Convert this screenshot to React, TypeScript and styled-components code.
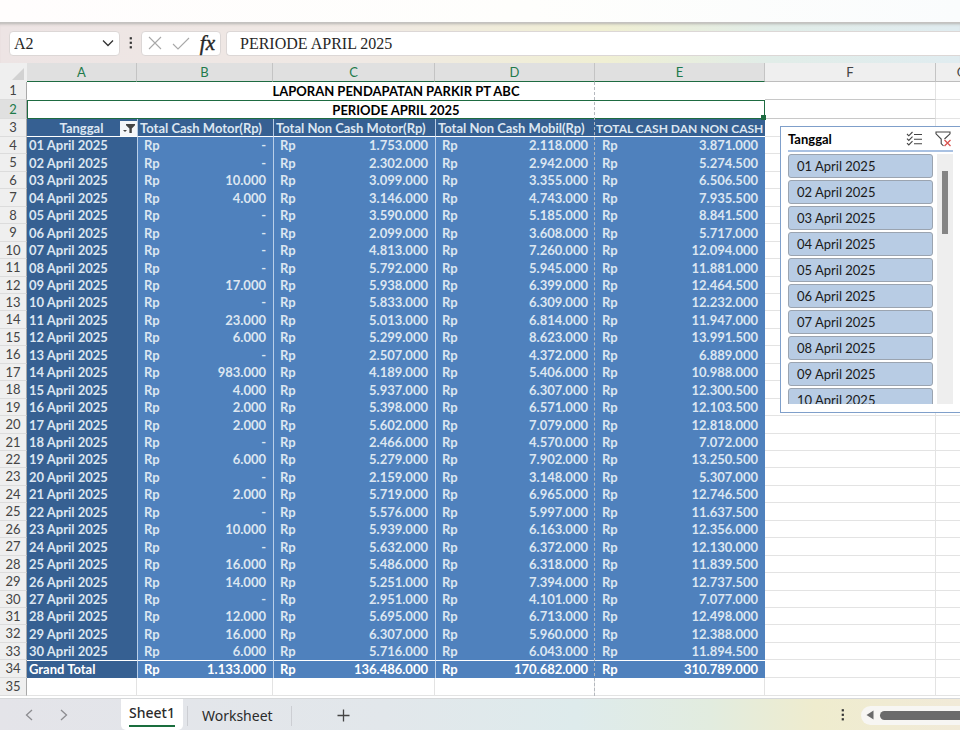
import React from "react";
import styled, { createGlobalStyle, css } from "styled-components";

const GlobalStyle = createGlobalStyle`
  * { box-sizing: border-box; }
  body { margin: 0; background: #fff; overflow-x: hidden; }
  button, input { font: inherit; color: inherit; margin: 0; }
`;

const sans = `Lato, "Liberation Sans", sans-serif`;
const serif = `"Liberation Serif", serif`;
const ui = `"Noto Sans", "Open Sans", sans-serif`;
const green = "#1e6b41";

const Page = styled.div`
  display: flex;
  flex-direction: column;
  min-height: 100vh;
  overflow: hidden;
  font-family: ${sans};
`;

const Ribbon = styled.header`
  height: 22px;
  background: linear-gradient(90deg, #fffdfd, #fefefc 55%, #fafcfd);
`;

const FormulaBar = styled.div`
  display: flex;
  align-items: center;
  height: 41px;
  padding-left: 9px;
  border-top: 1px solid #c4c2c0;
  box-shadow: inset 0 3px 3px -2px #b5b3b0;
  background: linear-gradient(90deg, #ede4e4, #f0e9e4 38%, #f0efd3 63%, #e1ede8 80%, #e0ecf0);
  font-family: ${serif};
  font-size: 16px;
  color: #262626;
`;

const FieldBox = styled.div`
  display: flex;
  align-items: center;
  height: 25px;
  background: #fff;
  border: 1px solid #dcd7d6;
  border-radius: 4px;
`;

const NameBox = styled(FieldBox)`
  width: 111px;
  padding: 0 5px 0 4px;
`;

const FormulaButtons = styled(FieldBox)`
  width: 80px;
  justify-content: space-between;
  padding: 0 5px 0 6px;
`;

const FormulaField = styled(FieldBox)`
  flex: 1;
  margin-left: 5px;
  padding-left: 13px;
  border-right: 0;
  border-radius: 4px 0 0 4px;
`;

const TextInput = styled.input`
  flex: 1;
  min-width: 0;
  padding: 2px 0 0;
  border: 0;
  outline: 0;
  background: transparent;
`;

const IconButton = styled.button`
  display: inline-flex;
  align-items: center;
  justify-content: center;
  padding: 0;
  border: 0;
  background: transparent;
`;

const BarGrip = styled(IconButton)`
  width: 21px;
`;

const FxButton = styled(IconButton)`
  font-size: 21px;
  font-style: italic;
  line-height: 20px;
  -webkit-text-stroke: 0.4px #262626;
`;

const SheetArea = styled.main`
  position: relative;
  flex: 1;
  overflow: hidden;
  background: #fff;
`;

const Grid = styled.table`
  width: 100%;
  min-width: 988px;
  table-layout: fixed;
  border-collapse: separate;
  border-spacing: 0;
  font-size: 13px;
  line-height: 15px;
`;

const Col = styled.col<{ $w?: number }>`
  width: ${(p) => (p.$w ? `${p.$w}px` : "auto")};
`;

const Row = styled.tr<{ $h: number }>`
  height: ${(p) => p.$h}px;
`;

const cell = css`
  padding: 0;
  overflow: hidden;
  white-space: nowrap;
`;

const ColumnHead = styled.th<{ $active?: boolean }>`
  ${cell}
  font-weight: 400;
  color: ${(p) => (p.$active ? "#1f7a4b" : "#444")};
  background: ${(p) => (p.$active ? "#e0e0e0" : "#efefef")};
  border-bottom: 1px solid ${(p) => (p.$active ? green : "#bdbdbd")};
  border-right: 1px solid #c4c4c4;
`;

const Corner = styled.td`
  padding: 0 2px 1px 0;
  background: #efefef;
  text-align: right;
  vertical-align: bottom;
  line-height: 0;
`;

const RowHead = styled.th<{ $active?: boolean }>`
  ${cell}
  font-weight: 400;
  color: ${(p) => (p.$active ? "#1f7a4b" : "#444")};
  background: ${(p) => (p.$active ? "#e0e0e0" : "#efefef")};
  border-bottom: 1px solid #dcdcdc;
  border-right: 1px solid #a9a9a9;
`;

const Blank = styled.td<{ $strong?: boolean }>`
  ${cell}
  border-bottom: 1px solid ${(p) => (p.$strong ? "#c8c8c8" : "#e3e3e3")};
  border-right: 1px solid #e3e3e3;
`;

const Title = styled.td<{ $selected?: boolean }>`
  position: relative;
  padding: 0;
  text-align: center;
  font-weight: 700;
  color: #000;
  ${(p) =>
    p.$selected &&
    css`
      padding-top: 1px;
      border: 1px solid ${green};
    `}
`;

const FillHandle = styled.span`
  position: absolute;
  right: -2px;
  bottom: -2px;
  width: 5px;
  height: 5px;
  background: ${green};
  z-index: 1;
`;

const FieldHead = styled.th<{ $divided?: boolean; $long?: boolean }>`
  ${cell}
  padding: 1px 0 0 ${(p) => (p.$divided ? 2 : 1)}px;
  text-align: left;
  font-size: ${(p) => (p.$long ? 12 : 13)}px;
  font-weight: 700;
  color: #dce6f1;
  background: #366092;
  border-bottom: 1px solid #fff;
  border-left: ${(p) => (p.$divided ? "1px solid #b9cbe2" : "0")};
`;

const FilterHead = styled.div`
  display: grid;
  grid-template-columns: 15px 1fr 17px;
  align-items: center;
  text-align: center;
`;

const FilterButton = styled(IconButton)`
  height: 15px;
  background: #f4f6f9;
`;

const DateCell = styled.th<{ $total?: boolean }>`
  ${cell}
  padding-left: 2px;
  text-align: left;
  font-weight: 700;
  color: ${(p) => (p.$total ? "#fff" : "#dce6f1")};
  background: #366092;
  border-top: ${(p) => (p.$total ? "1px solid #fff" : "0")};
`;

const MoneyCell = styled.td<{ $total?: boolean; $divided?: boolean }>`
  ${cell}
  padding: 0 7px 0 ${(p) => (p.$divided ? 6 : 7)}px;
  font-weight: 700;
  color: ${(p) => (p.$total ? "#fff" : "#dce6f1")};
  background: #4f81bd;
  border-top: ${(p) => (p.$total ? "1px solid #fff" : "0")};
  border-left: ${(p) => (p.$divided ? "1px solid #b9cfe9" : "0")};
`;

const Money = styled.div`
  display: flex;
  justify-content: space-between;
`;

const PageBreak = styled.div`
  position: absolute;
  top: 19px;
  bottom: 2px;
  left: 594px;
  border-left: 1px dashed #b4b8be;
`;

const Slicer = styled.section`
  position: absolute;
  top: 63px;
  left: 780px;
  width: 182px;
  height: 287px;
  padding: 0 8px 8px 7px;
  display: flex;
  flex-direction: column;
  background: #fff;
  border: 1px solid #7f9fca;
`;

const SlicerHead = styled.div`
  display: flex;
  align-items: center;
  height: 25px;
  border-bottom: 2px solid #a9c1e2;
`;

const SlicerTitle = styled.h2`
  flex: 1;
  margin: 0;
  font-size: 13px;
  line-height: 16px;
  font-weight: 700;
  color: #000;
`;

const SlicerTools = styled.div`
  display: flex;
  gap: 12px;
  padding-right: 1px;
`;

const SlicerBody = styled.div`
  flex: 1;
  display: flex;
  justify-content: space-between;
  min-height: 0;
  padding-top: 2px;
`;

const SlicerList = styled.div`
  display: flex;
  flex-direction: column;
  gap: 2px;
  width: 145px;
  overflow: hidden;
`;

const SlicerItem = styled.button`
  flex: none;
  height: 24px;
  padding: 0 8px;
  text-align: left;
  font-size: 13px;
  line-height: 16px;
  color: #1a1a1a;
  background: #b8cce4;
  border: 1px solid #9ba4b0;
  border-radius: 3px;
`;

const SlicerTrack = styled.div`
  width: 16px;
  padding: 17px 5px 0;
  background: #eee;
`;

const SlicerThumb = styled.div`
  height: 63px;
  background: #858585;
`;

const TabBar = styled.footer`
  display: flex;
  align-items: flex-start;
  height: 32px;
  padding-left: 20px;
  border-top: 1px solid #d6d8da;
  background: linear-gradient(90deg, #e4e4e9, #e2e7eb 40%, #deebec 60%, #e2ecdf 74%, #efecce 85%, #f1ead8);
  font-family: ${ui};
  font-size: 14px;
  color: #2b2b2b;
`;

const TabNav = styled.div`
  display: flex;
  gap: 17px;
  width: 101px;
`;

const NavButton = styled(IconButton)`
  width: 18px;
  height: 32px;
`;

const Tab = styled.button<{ $active?: boolean }>`
  height: ${(p) => (p.$active ? 31 : 32)}px;
  padding: ${(p) => (p.$active ? "0 8px" : "5px 14px 0")};
  border: 0;
  border-radius: 0 0 5px 5px;
  background: ${(p) => (p.$active ? "#fff" : "transparent")};
  line-height: 20px;
`;

const TabLabel = styled.span<{ $active?: boolean }>`
  display: block;
  font-weight: ${(p) => (p.$active ? 500 : 400)};
  padding-bottom: 2px;
  border-bottom: 2px solid ${(p) => (p.$active ? "#1a6e3d" : "transparent")};
`;

const TabDivider = styled.span`
  width: 1px;
  height: 20px;
  margin: 7px 0 0 4px;
  background: #ccced3;
`;

const AddButton = styled(NavButton)`
  margin-left: 43px;
`;

const ScrollZone = styled.div`
  display: flex;
  align-items: center;
  gap: 16px;
  width: 119px;
  height: 32px;
  margin-left: auto;
`;

const ScrollTrack = styled.div`
  flex: 1;
  display: flex;
  align-items: center;
  gap: 6px;
  height: 19px;
  padding-left: 5px;
  background: #f7f6f3;
  border-radius: 10px 0 0 10px;
`;

const ScrollThumb = styled.div`
  flex: 1;
  height: 9px;
  background: #6b6b6b;
  border-radius: 5px 0 0 5px;
`;

const Dots = () => (
  <svg width="4" height="14" viewBox="0 0 4 14" fill="#333" aria-hidden="true">
    <rect x="0.7" y="1.2" width="2.2" height="2.2" />
    <rect x="0.7" y="5.7" width="2.2" height="2.2" />
    <rect x="0.7" y="10.2" width="2.2" height="2.2" />
  </svg>
);

const Line = ({ w, h, d, color, sw = 1.3 }: { w: number; h: number; d: string; color: string; sw?: number }) => (
  <svg width={w} height={h} viewBox={`0 0 ${w} ${h}`} fill="none" stroke={color} strokeWidth={sw} aria-hidden="true">
    <path d={d} />
  </svg>
);

const dailyTotals: string[][] = `- 1.753.000 2.118.000 3.871.000
- 2.302.000 2.942.000 5.274.500
10.000 3.099.000 3.355.000 6.506.500
4.000 3.146.000 4.743.000 7.935.500
- 3.590.000 5.185.000 8.841.500
- 2.099.000 3.608.000 5.717.000
- 4.813.000 7.260.000 12.094.000
- 5.792.000 5.945.000 11.881.000
17.000 5.938.000 6.399.000 12.464.500
- 5.833.000 6.309.000 12.232.000
23.000 5.013.000 6.814.000 11.947.000
6.000 5.299.000 8.623.000 13.991.500
- 2.507.000 4.372.000 6.889.000
983.000 4.189.000 5.406.000 10.988.000
4.000 5.937.000 6.307.000 12.300.500
2.000 5.398.000 6.571.000 12.103.500
2.000 5.602.000 7.079.000 12.818.000
- 2.466.000 4.570.000 7.072.000
6.000 5.279.000 7.902.000 13.250.500
- 2.159.000 3.148.000 5.307.000
2.000 5.719.000 6.965.000 12.746.500
- 5.576.000 5.997.000 11.637.500
10.000 5.939.000 6.163.000 12.356.000
- 5.632.000 6.372.000 12.130.000
16.000 5.486.000 6.318.000 11.839.500
14.000 5.251.000 7.394.000 12.737.500
- 2.951.000 4.101.000 7.077.000
12.000 5.695.000 6.713.000 12.498.000
16.000 6.307.000 5.960.000 12.388.000
6.000 5.716.000 6.043.000 11.894.500`
  .split("\n")
  .map((line) => line.split(" "));

const grandTotals = ["1.133.000", "136.486.000", "170.682.000", "310.789.000"];
const fieldNames = ["Total Cash Motor(Rp)", "Total Non Cash Motor(Rp)", "Total Non Cash Mobil(Rp)", "TOTAL CASH DAN NON CASH"];
const columnWidths = [27, 110, 136, 162, 160, 170, 171];
const dateLabel = (day: number) => `${String(day).padStart(2, "0")} April 2025`;

function MoneyCells({ values, total }: { values: string[]; total?: boolean }) {
  return (
    <>
      {values.map((value, i) => (
        <MoneyCell key={i} $total={total} $divided={i < 3}>
          <Money>
            <span>Rp</span>
            <span>{value}</span>
          </Money>
        </MoneyCell>
      ))}
      <Blank />
      <Blank />
    </>
  );
}

export default function App() {
  return (
    <Page>
      <GlobalStyle />
      <Ribbon />
      <FormulaBar>
        <NameBox>
          <TextInput aria-label="Name box" defaultValue="A2" />
          <IconButton aria-label="Open name list">
            <Line w={12} h={8} d="M1 1.5L6 6.5L11 1.5" color="#333" />
          </IconButton>
        </NameBox>
        <BarGrip aria-label="Resize name box">
          <Dots />
        </BarGrip>
        <FormulaButtons>
          <IconButton aria-label="Cancel">
            <Line w={14} h={14} d="M1 1L13 13M13 1L1 13" color="#a8a8a8" sw={1.1} />
          </IconButton>
          <IconButton aria-label="Enter">
            <Line w={18} h={13} d="M1 7L6 12L17 1" color="#a8a8a8" sw={1.1} />
          </IconButton>
          <FxButton aria-label="Insert function">fx</FxButton>
        </FormulaButtons>
        <FormulaField>
          <TextInput aria-label="Formula" defaultValue="PERIODE APRIL 2025" />
        </FormulaField>
      </FormulaBar>

      <SheetArea>
        <Grid>
          <colgroup>
            {columnWidths.map((w, i) => (
              <Col key={i} $w={w} />
            ))}
            <Col />
          </colgroup>
          <thead>
            <Row $h={19}>
              <Corner>
                <svg width="14" height="13" viewBox="0 0 14 13" aria-hidden="true">
                  <path d="M13 0V12H1Z" fill="#d2d2d2" />
                </svg>
              </Corner>
              {["A", "B", "C", "D", "E", "F", "G"].map((name, i) => (
                <ColumnHead key={name} scope="col" $active={i < 5}>
                  {name}
                </ColumnHead>
              ))}
            </Row>
          </thead>
          <tbody>
            <Row $h={18}>
              <RowHead scope="row">1</RowHead>
              <Title colSpan={5}>LAPORAN PENDAPATAN PARKIR PT ABC</Title>
              <Blank $strong />
              <Blank />
            </Row>
            <Row $h={19}>
              <RowHead scope="row" $active>2</RowHead>
              <Title colSpan={5} $selected>
                PERIODE APRIL 2025
                <FillHandle />
              </Title>
              <Blank $strong />
              <Blank />
            </Row>
            <Row $h={18}>
              <RowHead scope="row">3</RowHead>
              <FieldHead scope="col">
                <FilterHead>
                  <span />
                  <span>Tanggal</span>
                  <FilterButton aria-label="Filter Tanggal">
                    <svg width="14" height="11" viewBox="0 0 14 11" fill="#444" aria-hidden="true">
                      <path d="M4 1H13V2.2L9.8 5.4V10H7.4V5.4L4 2.2Z" />
                      <path d="M1 7H5L3 9Z" />
                    </svg>
                  </FilterButton>
                </FilterHead>
              </FieldHead>
              {fieldNames.map((name, i) => (
                <FieldHead key={name} scope="col" $divided={i < 3} $long={i === 3}>
                  {name}
                </FieldHead>
              ))}
              <Blank />
              <Blank />
            </Row>
            {dailyTotals.map((values, i) => (
              <Row key={i} $h={(i % 9) % 2 ? 18 : 17}>
                <RowHead scope="row">{i + 4}</RowHead>
                <DateCell scope="row">{dateLabel(i + 1)}</DateCell>
                <MoneyCells values={values} />
              </Row>
            ))}
            <Row $h={18}>
              <RowHead scope="row">34</RowHead>
              <DateCell scope="row" $total>Grand Total</DateCell>
              <MoneyCells values={grandTotals} total />
            </Row>
            <Row $h={18}>
              <RowHead scope="row">35</RowHead>
              {columnWidths.map((_, i) => (
                <Blank key={i} />
              ))}
            </Row>
          </tbody>
        </Grid>
        <PageBreak />
        <Slicer>
          <SlicerHead>
            <SlicerTitle>Tanggal</SlicerTitle>
            <SlicerTools>
              <IconButton aria-label="Multi-select">
                <Line
                  w={17}
                  h={15}
                  d="M1 3L2.8 4.8L6.5 1M1 7.7L2.8 9.5L6.5 5.7M1 12.2L2.8 14L6.5 10.2M8 3.5H16M8 8.2H16M8 12.8H16"
                  color="#444"
                  sw={1.1}
                />
              </IconButton>
              <IconButton aria-label="Clear filter">
                <svg width="17" height="16" viewBox="0 0 17 16" fill="none" strokeWidth="1.1" aria-hidden="true">
                  <path d="M9.5 8L15 2.8V1H1V2.8L6.2 8V12.5L8.5 15" stroke="#444" />
                  <path d="M9.5 9L15.5 15M15.5 9L9.5 15" stroke="#d9534f" strokeWidth="1.3" />
                </svg>
              </IconButton>
            </SlicerTools>
          </SlicerHead>
          <SlicerBody>
            <SlicerList>
              {Array.from({ length: 10 }, (_, i) => (
                <SlicerItem key={i}>{dateLabel(i + 1)}</SlicerItem>
              ))}
            </SlicerList>
            <SlicerTrack>
              <SlicerThumb />
            </SlicerTrack>
          </SlicerBody>
        </Slicer>
      </SheetArea>

      <TabBar>
        <TabNav>
          <NavButton aria-label="Previous sheet">
            <Line w={8} h={12} d="M7 1L1.5 6L7 11" color="#8c8c90" />
          </NavButton>
          <NavButton aria-label="Next sheet">
            <Line w={8} h={12} d="M1 1L6.5 6L1 11" color="#8c8c90" />
          </NavButton>
        </TabNav>
        <Tab $active>
          <TabLabel $active>Sheet1</TabLabel>
        </Tab>
        <TabDivider />
        <Tab>
          <TabLabel>Worksheet</TabLabel>
        </Tab>
        <TabDivider />
        <AddButton aria-label="New sheet">
          <Line w={13} h={13} d="M6.5 0.5V12.5M0.5 6.5H12.5" color="#444" />
        </AddButton>
        <ScrollZone>
          <IconButton aria-label="Resize scroll bar">
            <Dots />
          </IconButton>
          <ScrollTrack>
            <IconButton aria-label="Scroll left">
              <svg width="8" height="10" viewBox="0 0 8 10" aria-hidden="true">
                <path d="M7.5 0.5V9.5L0.5 5Z" fill="#6b6b6b" />
              </svg>
            </IconButton>
            <ScrollThumb />
          </ScrollTrack>
        </ScrollZone>
      </TabBar>
    </Page>
  );
}
